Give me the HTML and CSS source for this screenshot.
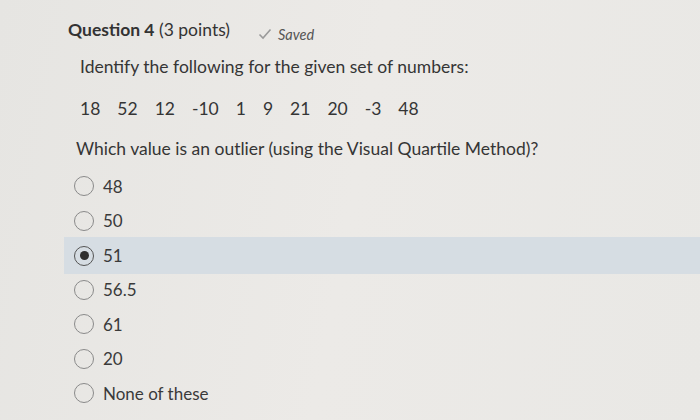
FILE: index.html
```html
<!DOCTYPE html>
<html lang="en">
<head>
    <meta charset="UTF-8">
    <title>Question 4</title>
    <link rel="stylesheet" href="styles.css">
</head>
<body>

    <div class="question">
        <div class="q-header">
            <h2><strong>Question 4</strong> (3 points)</h2>
            <span class="saved">
                <svg width="14" height="12" viewBox="0 0 14 12"><path d="M1.5 6.5 L5 10 L12.5 1.5" fill="none" stroke="#9a9a9a" stroke-width="1.6"/></svg>
                Saved
            </span>
        </div>

        <p class="prompt">Identify the following for the given set of numbers:</p>
        <p class="numbers">
            <span>18</span><span>52</span><span>12</span><span>-10</span><span>1</span><span>9</span><span>21</span><span>20</span><span>-3</span><span>48</span>
        </p>
        <p class="ask">Which value is an outlier (using the Visual Quartile Method)?</p>

        <ul class="options">
            <li><span class="radio"></span>48</li>
            <li><span class="radio"></span>50</li>
            <li class="selected"><span class="radio checked"></span>51</li>
            <li><span class="radio"></span>56.5</li>
            <li><span class="radio"></span>61</li>
            <li><span class="radio"></span>20</li>
            <li><span class="radio"></span>None of these</li>
        </ul>
    </div>

</body>
</html>
```

FILE: styles.css
```css
body { margin: 0; background: linear-gradient(100deg, #e6e5e2 0%, #eceae7 50%, #e9e8e5 100%); font-family: Lato, "Open Sans", sans-serif; color: #353535; height: 420px; overflow: hidden; }
.question { padding: 19px 0 0 0; }
.q-header { display: flex; align-items: baseline; padding-left: 68px; }
.q-header h2 { margin: 0; font-size: 17.5px; font-weight: normal; color: #333; }
.q-header strong { font-weight: bold; }
.saved { margin-left: 28px; font-size: 14.5px; font-style: italic; color: #555; display: flex; align-items: center; gap: 6px; position: relative; top: 4px; }
.prompt { margin: 16px 0 0 80px; font-size: 17.5px; }
.numbers { margin: 21px 0 0 80px; font-size: 17.5px; display: flex; gap: 17px; }
.ask { margin: 19px 0 0 76px; font-size: 17.5px; }
.options { list-style: none; margin: 10px 0 0 0; padding: 0; }
.options li { display: flex; align-items: center; height: 34.5px; padding-left: 74px; font-size: 17px; color: #3a3a3a; }
.options li.selected { background: #d6dde3; margin-left: 64px; padding-left: 10px; height: 37px; margin-top: -1px; margin-bottom: -1.5px; }
.radio { width: 20px; height: 20px; border: 1.5px solid #8a8a8a; border-radius: 50%; margin-right: 9px; box-sizing: border-box; display: flex; align-items: center; justify-content: center; }
.radio.checked { border-color: #555; }
.radio.checked::after { content: ""; width: 9px; height: 9px; border-radius: 50%; background: #2f2f2f; }
```
